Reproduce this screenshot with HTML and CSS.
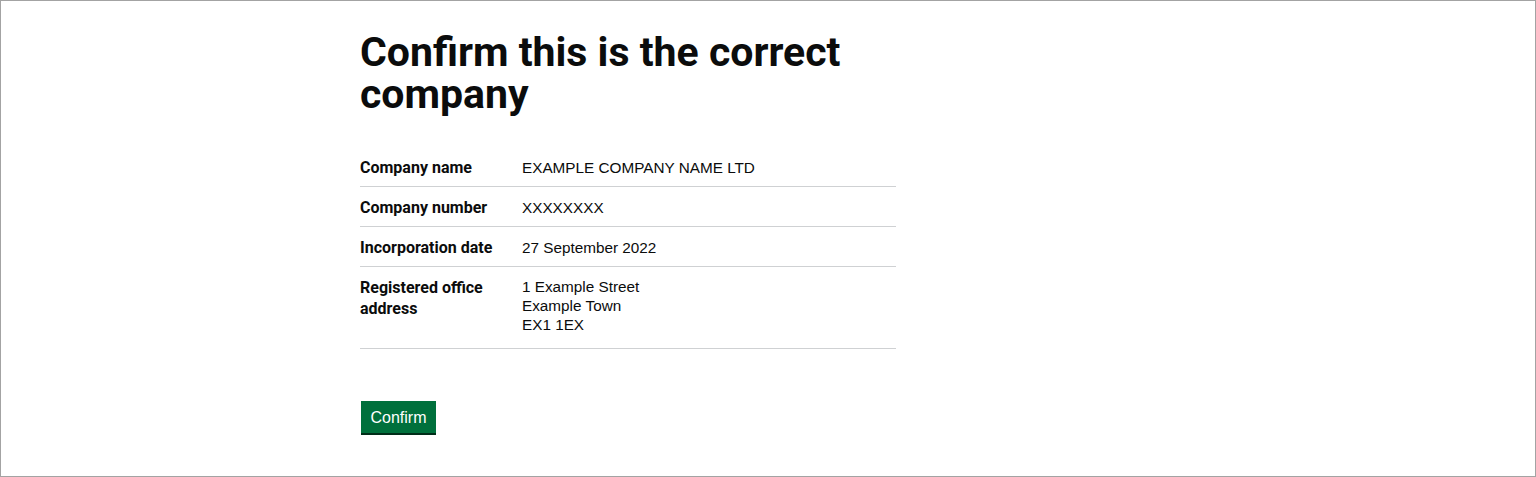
FILE: index.html
```html
<!DOCTYPE html>
<html>

<head>
  <title>Confirm this is the correct company</title>
  <link rel="stylesheet" href="styles.css">
</head>

<body>
  <div class="frame">
    <main class="main">
      <h1 class="heading">Confirm this is the correct company</h1>

      <dl class="summary">
        <div class="summary-row">
          <dt class="summary-key">Company name</dt>
          <dd class="summary-value">EXAMPLE COMPANY NAME LTD</dd>
        </div>
        <div class="summary-row">
          <dt class="summary-key">Company number</dt>
          <dd class="summary-value">XXXXXXXX</dd>
        </div>
        <div class="summary-row">
          <dt class="summary-key">Incorporation date</dt>
          <dd class="summary-value">27 September 2022</dd>
        </div>
        <div class="summary-row">
          <dt class="summary-key">Registered office address</dt>
          <dd class="summary-value address">1 Example Street<br>Example Town<br>EX1 1EX</dd>
        </div>
      </dl>

      <button class="button">Confirm</button>
    </main>
  </div>
</body>

</html>
```

FILE: styles.css
```css
/* Page frame */
body {
  margin: 0;
  background-color: #ffffff;
  color: #0b0c0c;
}

.frame {
  box-sizing: border-box;
  height: 477px;
  border: 1px solid #a3a3a3;
  padding: 30px 0 0 359px;
}

.main {
  width: 536px;
}

/* Heading */
.heading {
  margin: 0 0 32px;
  font-family: Roboto, Arial, sans-serif;
  font-weight: 700;
  font-size: 41px;
  line-height: 42px;
  width: 520px;
}

/* Summary list */
.summary {
  margin: 0;
}

.summary-row {
  display: flex;
  border-bottom: 1px solid #cfd1d3;
  padding: 10px 0 8px;
}

.summary-key {
  width: 162px;
  margin: 0;
  font-family: Roboto, Arial, sans-serif;
  font-weight: 700;
  font-size: 16px;
  line-height: 21px;
}

.summary-value {
  margin: 0;
  font-family: "Liberation Sans", Arial, sans-serif;
  font-size: 15.3px;
  line-height: 21px;
}

.address {
  line-height: 19px;
  padding-bottom: 6px;
}

/* Button */
.button {
  margin-top: 52px;
  margin-left: 1px;
  padding: 7px 9.5px 6px;
  border: 0;
  border-radius: 0;
  background-color: #00703c;
  box-shadow: 0 2px 0 #002d18;
  color: #ffffff;
  font-family: "Liberation Sans", Arial, sans-serif;
  font-size: 16px;
  line-height: 19px;
  cursor: pointer;
}
```
